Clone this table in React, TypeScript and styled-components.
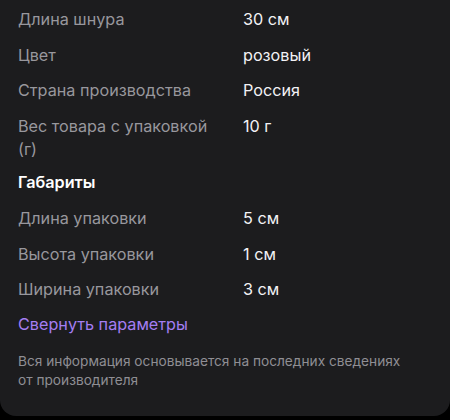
import React from "react";
import styled, { createGlobalStyle } from "styled-components";

const Global = createGlobalStyle`
  html, body { margin: 0; padding: 0; background: #000; }
  body { font-family: Inter, "Noto Sans", sans-serif; -webkit-font-smoothing: antialiased; }
`;

const Card = styled.section`
  width: 450px;
  box-sizing: border-box;
  background: #1c1c1e;
  border-radius: 0 0 16px 16px;
  padding: 2px 17px 26px 18px;
`;

const Params = styled.dl`
  margin: 0;
  display: grid;
  grid-template-columns: 209px 1fr;
  column-gap: 16px;
`;

const Label = styled.dt`
  margin: 0;
  padding: 6px 0;
  font-size: 16.2px;
  line-height: 23.5px;
  color: #98979d;
`;

const Value = styled.dd`
  margin: 0;
  padding: 6px 0;
  font-size: 16.2px;
  line-height: 23.5px;
  color: #f2f2f5;
`;

const Heading = styled.h3`
  margin: 0;
  padding: 3px 0 7px;
  font-size: 16.2px;
  line-height: 23.5px;
  font-weight: 600;
  color: #ffffff;
`;

const Toggle = styled.button`
  display: block;
  margin: 5px 0 0;
  padding: 0;
  border: 0;
  background: none;
  font-family: inherit;
  font-size: 16.2px;
  line-height: 23.5px;
  color: #a47ef3;
  cursor: pointer;
`;

const Note = styled.p`
  margin: 16px 0 0;
  max-width: 392px;
  font-size: 13.7px;
  line-height: 19px;
  color: #8f8e94;
`;

type Row = [string, string];

const main: Row[] = [
  ["Длина шнура", "30 см"],
  ["Цвет", "розовый"],
  ["Страна производства", "Россия"],
  ["Вес товара с упаковкой (г)", "10 г"],
];

const dims: Row[] = [
  ["Длина упаковки", "5 см"],
  ["Высота упаковки", "1 см"],
  ["Ширина упаковки", "3 см"],
];

const ParamList = ({ rows }: { rows: Row[] }) => (
  <Params>
    {rows.map(([k, v]) => (
      <React.Fragment key={k}>
        <Label>{k}</Label>
        <Value>{v}</Value>
      </React.Fragment>
    ))}
  </Params>
);

export default function App() {
  return (
    <>
      <Global />
      <Card>
        <ParamList rows={main} />
        <Heading>Габариты</Heading>
        <ParamList rows={dims} />
        <Toggle type="button">Свернуть параметры</Toggle>
        <Note>Вся информация основывается на последних сведениях от производителя</Note>
      </Card>
    </>
  );
}
